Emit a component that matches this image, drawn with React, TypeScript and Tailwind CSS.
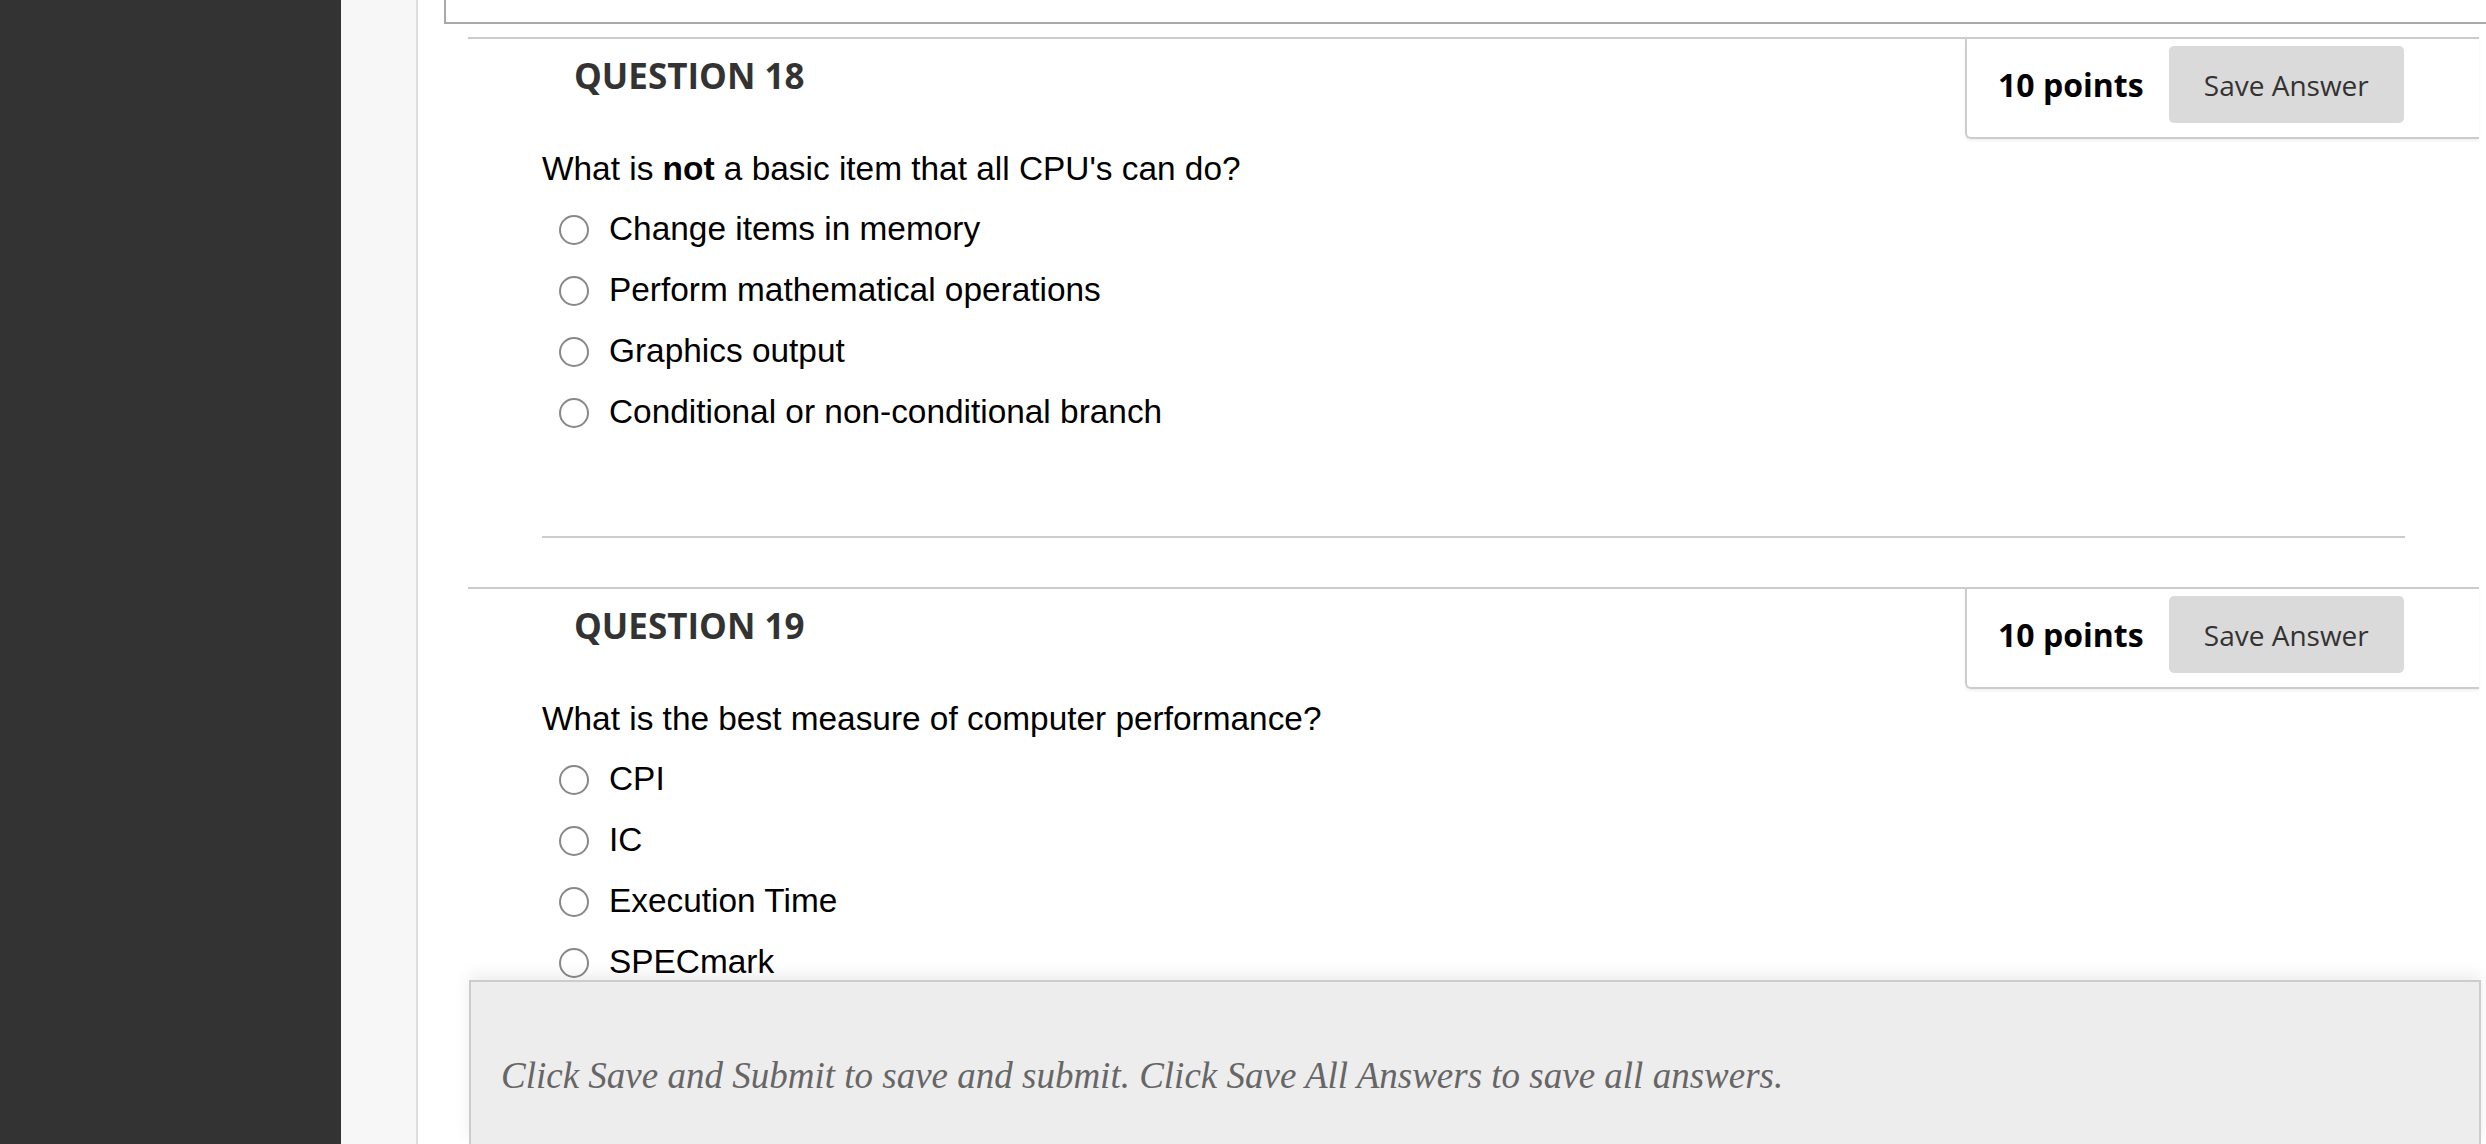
import type { ReactNode } from "react";

type Question = {
  num: number;
  points: number;
  prompt: ReactNode;
  options: string[];
};

const QUESTIONS: Question[] = [
  {
    num: 18,
    points: 10,
    prompt: (
      <>
        What is <b>not</b> a basic item that all CPU's can do?
      </>
    ),
    options: [
      "Change items in memory",
      "Perform mathematical operations",
      "Graphics output",
      "Conditional or non-conditional branch",
    ],
  },
  {
    num: 19,
    points: 10,
    prompt: <>What is the best measure of computer performance?</>,
    options: ["CPI", "IC", "Execution Time", "SPECmark"],
  },
];

function QuestionBlock({ q }: { q: Question }) {
  return (
    <section className="border-t-2 border-[#cccccc] mb-[49px]">
      <div className="flex items-start justify-between">
        <h3 className="pl-[106px] pt-[15px] text-[35px] leading-[44px] font-bold text-[#333333] font-['Open_Sans',sans-serif]">
          QUESTION {q.num}
        </h3>
        <div className="flex items-center w-[514px] h-[100px] border-l-2 border-b-2 border-[#cccccc] rounded-bl-[6px] shadow-[0_2px_3px_rgba(0,0,0,0.06)] pl-[31px] pr-[75px] pt-[7px] pb-[14px] font-['Open_Sans',sans-serif]">
          <span className="text-[32px] font-bold text-black whitespace-nowrap">{q.points} points</span>
          <button className="ml-[25px] w-[237px] h-[77px] rounded-[5px] bg-[#dadada] text-[28px] text-[#333333]">
            Save Answer
          </button>
        </div>
      </div>
      <div className="px-[74px] font-['Liberation_Sans',Arial,sans-serif] text-black text-[33.4px]">
        <div className="h-[60px] flex items-center">
          <p>{q.prompt}</p>
        </div>
        <ul>
          {q.options.map((opt) => (
            <li key={opt} className="h-[61px] flex items-center">
              <span className="ml-[17px] w-[30px] h-[30px] rounded-full border-2 border-[#888888] bg-white shrink-0" />
              <span className="ml-[20px]">{opt}</span>
            </li>
          ))}
        </ul>
        <div className="mt-[93px] border-t-2 border-[#cccccc]" />
      </div>
    </section>
  );
}

export default function App() {
  return (
    <div className="relative flex h-[1144px] w-full overflow-hidden bg-white">
      <aside className="w-[341px] shrink-0 bg-[#333333]" />
      <div className="w-[77px] shrink-0 bg-[#f7f7f7] border-r-2 border-[#dddddd]" />
      <main className="flex-1 min-w-0">
        <div className="ml-[26px] h-[24px] border-l-2 border-b-2 border-[#a9a9a9]" />
        <div className="ml-[50px] mr-[7px] mt-[13px]">
          {QUESTIONS.map((q) => (
            <QuestionBlock key={q.num} q={q} />
          ))}
        </div>
      </main>
      <footer className="absolute left-[469px] right-[5px] top-[980px] bottom-0 bg-[#ededed] border-2 border-b-0 border-[#cccccc] shadow-[0_-6px_14px_rgba(0,0,0,0.07)] px-[30px] pt-[72px]">
        <p className="font-['Liberation_Serif',Georgia,serif] italic text-[37px] leading-[44px] text-[#666666] whitespace-nowrap">
          Click Save and Submit to save and submit. Click Save All Answers to save all answers.
        </p>
      </footer>
    </div>
  );
}
